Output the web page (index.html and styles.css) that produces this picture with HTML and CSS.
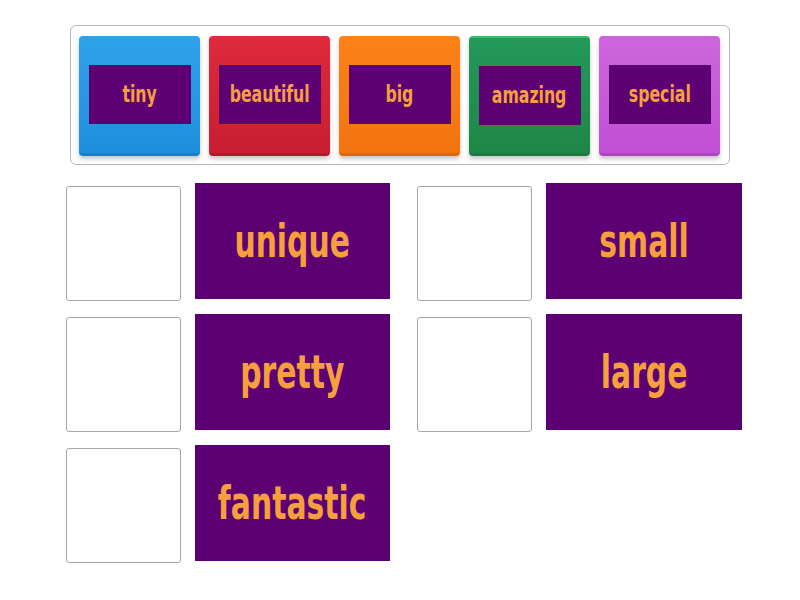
FILE: index.html
```html
<!DOCTYPE html>
<html>
<head>
<meta charset="utf-8">
<link rel="stylesheet" href="styles.css">
</head>
<body>
<div class="bank">
  <div class="tile blue"><div class="label"><span class="word">tiny</span></div></div>
  <div class="tile red"><div class="label"><span class="word">beautiful</span></div></div>
  <div class="tile orange"><div class="label"><span class="word">big</span></div></div>
  <div class="tile green"><div class="label"><span class="word">amazing</span></div></div>
  <div class="tile violet"><div class="label"><span class="word">special</span></div></div>
</div>
<div class="grid">
  <div class="pair"><div class="slot"></div><div class="card"><span class="word">unique</span></div></div>
  <div class="pair"><div class="slot"></div><div class="card"><span class="word">small</span></div></div>
  <div class="pair"><div class="slot"></div><div class="card"><span class="word">pretty</span></div></div>
  <div class="pair"><div class="slot"></div><div class="card"><span class="word">large</span></div></div>
  <div class="pair"><div class="slot"></div><div class="card"><span class="word">fantastic</span></div></div>
</div>
</body>
</html>
```
FILE: styles.css
```css
html, body {
  margin: 0;
  padding: 0;
  background: #fff;
}
body {
  font-family: "DejaVu Sans Condensed", "DejaVu Sans", sans-serif;
  font-stretch: condensed;
  font-weight: bold;
  padding-bottom: 20px;
}
.word {
  display: inline-block;
  white-space: nowrap;
}
.bank {
  box-sizing: border-box;
  width: 660px;
  height: 140px;
  margin: 25px 0 0 70px;
  border: 1px solid #b8b8b8;
  border-radius: 6px;
  padding: 10px 8px 8px 8px;
  display: flex;
  gap: 10px;
}
.tile {
  box-sizing: border-box;
  width: 121px;
  height: 120px;
  flex: none;
  border-radius: 4px;
  display: flex;
  align-items: center;
  justify-content: center;
  padding-bottom: 1px;
  box-shadow: 0 3px 4px rgba(0, 0, 0, 0.22);
}
.tile + .tile { margin-left: -1px; }
.blue { background: linear-gradient(#2fa2ec, #1f8fdc); border-bottom: 3px solid #1a7fc6; }
.red { background: linear-gradient(#de2a3c, #c81e32); border-bottom: 3px solid #b11a2c; }
.orange { background: linear-gradient(#fd8218, #f27410); border-bottom: 3px solid #e0660c; }
.green { background: linear-gradient(#23995a, #1f8748); border-bottom: 3px solid #1a7a40; border-top: 2px solid #2cc06a; }
.violet { background: linear-gradient(#cd66dc, #c050d4); border-bottom: 3px solid #b044c4; }
.label {
  width: 102px;
  height: 59px;
  background: #5c0073;
  color: #f6a03d;
  font-size: 23px;
  display: flex;
  align-items: center;
  justify-content: center;
}
.label .word {
  transform: scaleX(0.76);
}
.grid {
  margin: 18px 0 0 66px;
  display: grid;
  grid-template-columns: 324px 325px;
  column-gap: 27px;
  row-gap: 15px;
}
.pair {
  display: flex;
  gap: 14px;
  align-items: flex-start;
  height: 116px;
}
.slot {
  box-sizing: border-box;
  width: 115px;
  height: 115px;
  margin-top: 3px;
  border: 1px solid #a8a8a8;
  border-radius: 3px;
  flex: none;
}
.card {
  flex: 1;
  min-width: 0;
  height: 116px;
  background: #5c0073;
  color: #f6a03d;
  font-size: 46px;
  display: flex;
  align-items: center;
  justify-content: center;
}
.card .word {
  transform: scaleX(0.72);
}
```
